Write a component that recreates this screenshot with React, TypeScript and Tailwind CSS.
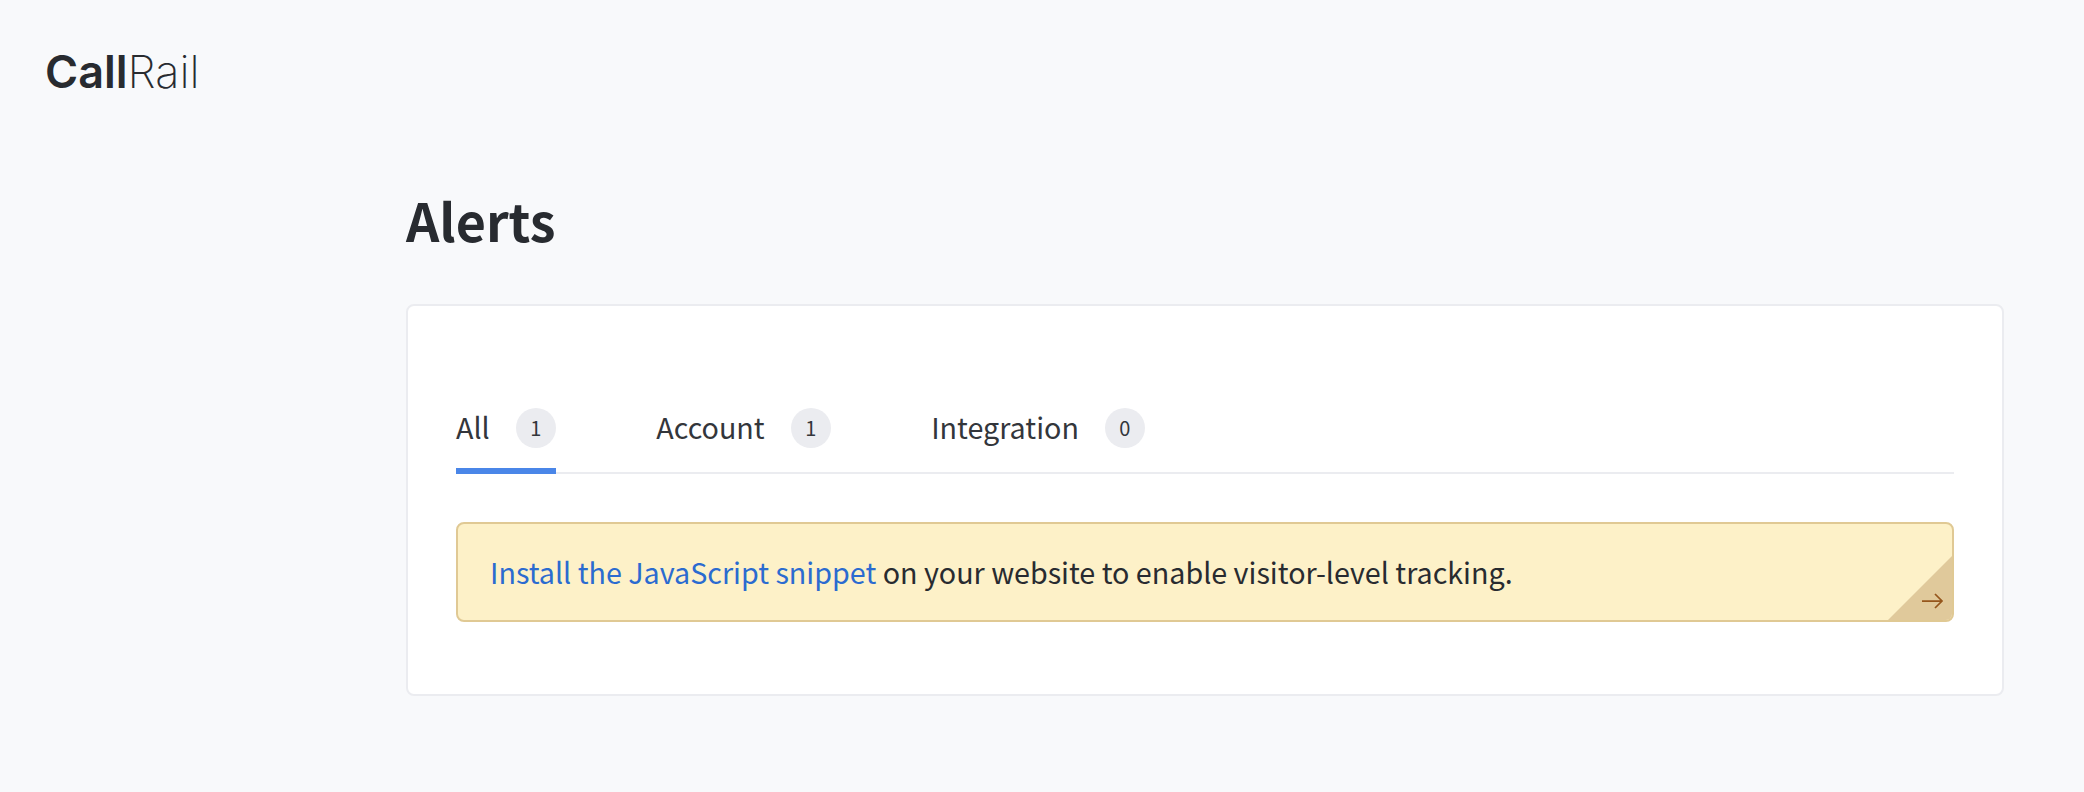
const tabs = [
  { id: "all", label: "All", count: 1, active: true },
  { id: "account", label: "Account", count: 1, active: false },
  { id: "integration", label: "Integration", count: 0, active: false },
]

const bodyFont = "font-['Noto_Sans_CJK_SC','Liberation_Sans',sans-serif]"

export default function App() {
  return (
    <div className={`min-h-screen bg-[#f8f9fb] ${bodyFont} text-[#282b30]`}>
      <header className="px-[45px] pt-[46px] h-[184px]">
        <div className="font-['Inter',sans-serif] text-[45px] leading-[52px] flex">
          <span className="font-semibold">Call</span>
          <span className="font-extralight">Rail</span>
        </div>
      </header>

      <main className="ml-[406px] w-[1598px]">
        <h1 className="text-[52px] leading-[72px] font-bold">Alerts</h1>

        <section className="mt-[48px] h-[392px] bg-white border-2 border-[#ebecf0] rounded-lg px-[48px] pt-[102px]">
          <nav className="flex gap-[100.5px] border-b-2 border-[#ebecf0] h-[66px]">
            {tabs.map((tab) => (
              <div
                key={tab.id}
                className={`flex items-start gap-[26px] h-[66px] ${tab.active ? "border-b-[6px] border-[#4a86e8]" : ""}`}
              >
                <span className="text-[28.7px] leading-[38px] text-[#33363b]">{tab.label}</span>
                <span className="w-10 h-10 rounded-full bg-[#ebecf0] flex items-center justify-center text-[20px] leading-none text-[#33363b]">
                  {tab.count}
                </span>
              </div>
            ))}
          </nav>

          <div className="relative mt-[48px] h-[100px] bg-[#fdf1c8] border-2 border-[#e0c994] rounded-lg overflow-hidden flex items-center pl-[32px] text-[28.7px]">
            <p>
              <a className="text-[#2b6bd0]">Install the JavaScript snippet</a> on your website to enable visitor-level tracking.
            </p>
            <div className="absolute right-0 bottom-0 w-[64px] h-[64px] bg-[#e0c99b] [clip-path:polygon(100%_0,100%_100%,0_100%)]" />
            <svg
              className="absolute right-[8px] bottom-[7px] w-6 h-6 text-[#95561c]"
              viewBox="0 0 24 24"
              fill="none"
              stroke="currentColor"
              strokeWidth="1.75"
            >
              <path d="M2 12h20M15 5l7 7-7 7" />
            </svg>
          </div>
        </section>
      </main>
    </div>
  )
}
